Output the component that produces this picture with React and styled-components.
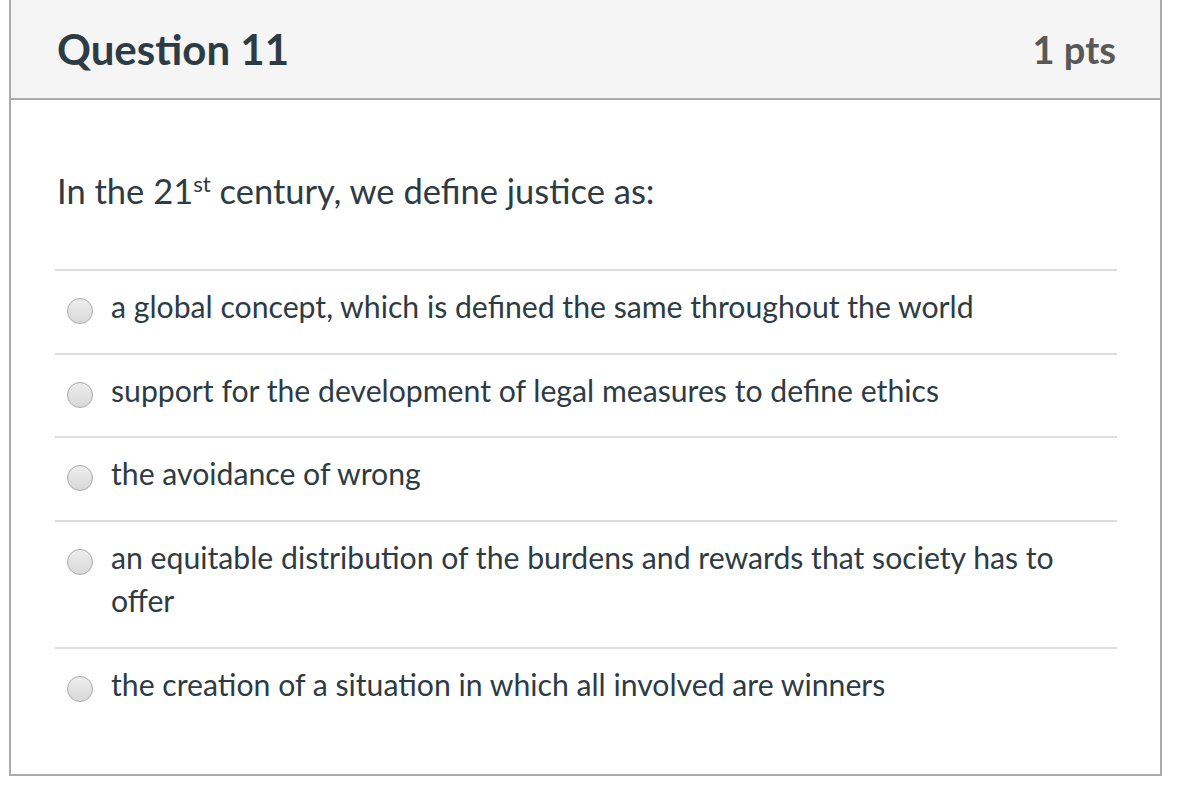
import React from "react";
import styled, { createGlobalStyle } from "styled-components";

const GlobalStyle = createGlobalStyle`
  body {
    margin: 0;
    background: #fff;
    font-family: Lato, "Open Sans", Arial, sans-serif;
    color: #2d3b45;
  }
`;

const Card = styled.div`
  width: 1149px;
  margin-left: 9px;
  border: 2px solid #aaa;
  border-top: 0;
`;

const Header = styled.div`
  display: flex;
  justify-content: space-between;
  align-items: center;
  height: 98px;
  padding: 0 44px 0 46px;
  background: #f5f5f5;
  border-bottom: 2px solid #aaa;
`;

const Title = styled.h2`
  margin: 0;
  font-size: 42px;
  font-weight: 700;
  color: #2d3b45;
`;

const Points = styled.div`
  font-size: 38px;
  font-weight: 700;
  color: #585858;
`;

const Body = styled.div`
  padding: 69px 43px 44px 44px;
`;

const Prompt = styled.p`
  margin: 0 0 56px 2px;
  font-size: 34.5px;
  line-height: 44px;
`;

const Sup = styled.sup`
  font-size: 0.64em;
  vertical-align: super;
  line-height: 0;
`;

const AnswerList = styled.div`
  display: flex;
  flex-direction: column;
`;

const Answer = styled.label`
  display: flex;
  align-items: flex-start;
  gap: 18px;
  padding: 14px 12px 24px;
  border-top: 2px solid #ddd;
  font-size: 30.2px;
  line-height: 43.5px;
`;

const Radio = styled.span`
  flex: none;
  box-sizing: border-box;
  width: 26px;
  height: 26px;
  margin-top: 13px;
  border-radius: 50%;
  border: 1.5px solid #aaa;
  background: linear-gradient(#ededed, #d9d9d9);
`;

const answers = [
  "a global concept, which is defined the same throughout the world",
  "support for the development of legal measures to define ethics",
  "the avoidance of wrong",
  "an equitable distribution of the burdens and rewards that society has to offer",
  "the creation of a situation in which all involved are winners",
];

const App = () => {
  return (
    <>
      <GlobalStyle />
      <Card>
        <Header>
          <Title>Question 11</Title>
          <Points>1 pts</Points>
        </Header>
        <Body>
          <Prompt>
            In the 21<Sup>st</Sup> century, we define justice as:
          </Prompt>
          <AnswerList>
            {answers.map((text) => (
              <Answer key={text}>
                <Radio />
                <span>{text}</span>
              </Answer>
            ))}
          </AnswerList>
        </Body>
      </Card>
    </>
  );
};

export default App;
